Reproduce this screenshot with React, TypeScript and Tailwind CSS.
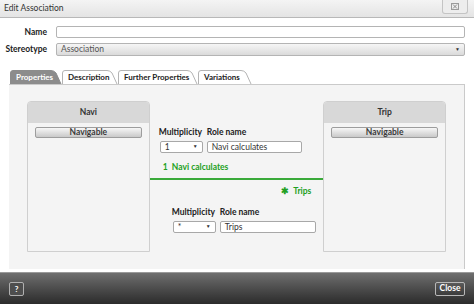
import type { ReactNode } from 'react'

const FONT = "font-['Lato','Noto_Sans',sans-serif]"

type TabDef = { label: string; width: number; active?: boolean }

const TABS: TabDef[] = [
  { label: 'Properties', width: 52, active: true },
  { label: 'Description', width: 56 },
  { label: 'Further Properties', width: 80 },
  { label: 'Variations', width: 54 },
]

function Tab({ label, width, active }: TabDef) {
  const w = width
  const d = `M0.5,14 L0.5,3 Q0.5,0.5 3,0.5 L${w - 11},0.5 Q${w - 8},0.5 ${w - 6},3 L${w - 1},14`
  return (
    <div className="relative h-[14px] shrink-0" style={{ width: w }}>
      <svg className="absolute inset-0" width={w} height={14}>
        <path
          d={d}
          fill={active ? '#8c8c8c' : '#ffffff'}
          stroke={active ? '#8c8c8c' : '#b4b4b4'}
          strokeWidth={1}
        />
      </svg>
      <span
        className={`relative block pl-[6px] pt-[1px] text-[8px] font-bold leading-[12px] ${
          active ? 'text-white' : 'text-[#222]'
        }`}
      >
        {label}
      </span>
    </div>
  )
}

function EndBox({ title }: { title: string }) {
  return (
    <div className="flex h-[151px] w-[123px] flex-col overflow-hidden rounded-t-[4px] border border-[#cfcfcf] bg-[#f4f4f4]">
      <div className="flex h-[21px] items-center justify-center bg-[#d8d8d8] text-[8.5px] font-bold text-[#333]">
        {title}
      </div>
      <div className="px-[7px] pt-[4px]">
        <NavButton />
      </div>
    </div>
  )
}

function NavButton() {
  return (
    <div className="flex h-[11px] items-center justify-center rounded-[2px] border border-[#9d9d9d] bg-gradient-to-b from-[#f7f7f7] to-[#c9c9c9] text-[8.5px] font-bold leading-none text-[#3a3a3a]">
      Navigable
    </div>
  )
}

function SmallSelect({ value }: { value: string }) {
  return (
    <div className="flex h-[12px] w-[43px] items-center justify-between rounded-[2px] border border-[#a8a8a8] bg-white pl-[4px] pr-[4px] text-[8.5px] leading-none text-[#333]">
      <span>{value}</span>
      <span className="text-[5px]">▼</span>
    </div>
  )
}

function TextBox({ value, width }: { value: string; width: number }) {
  return (
    <div
      className="flex h-[12px] items-center rounded-[2px] border border-[#a8a8a8] bg-white pl-[4px] text-[8.5px] leading-none text-[#333]"
      style={{ width }}
    >
      {value}
    </div>
  )
}

function RoleRow({ mult, role, width }: { mult: string; role: string; width: number }) {
  return (
    <div className="flex flex-col gap-[4px]">
      <div className="flex text-[8.5px] font-bold leading-[10px] text-[#222]">
        <span className="w-[48px]">Multiplicity</span>
        <span>Role name</span>
      </div>
      <div className="flex gap-[4px] pl-[1px]">
        <SmallSelect value={mult} />
        <TextBox value={role} width={width} />
      </div>
    </div>
  )
}

function FormRow({ label, children }: { label: string; children: ReactNode }) {
  return (
    <div className="flex items-center">
      <span className="w-[48px] pr-[1px] text-right text-[8.5px] font-bold text-[#222]">{label}</span>
      <div className="ml-[8px] mr-[9px] flex-1">{children}</div>
    </div>
  )
}

export default function App() {
  return (
    <div className={`${FONT} flex h-[304px] w-[474px] flex-col overflow-hidden bg-white`}>
      {/* title bar */}
      <div className="flex h-[18px] shrink-0 items-start justify-between border-b border-[#b8b8b8] bg-gradient-to-b from-[#f4f4f4] to-[#e4e4e4]">
        <span className="pl-[4px] pt-[2px] text-[8.5px] leading-[12px] text-[#333]">Edit Association</span>
        <div className="mr-[6px] flex h-[14px] w-[26px] items-center justify-center rounded-b-[3px] border border-t-0 border-[#c4c4c4] bg-[#ededed]">
          <svg width="8" height="7" viewBox="0 0 8 7">
            <rect x="0.5" y="0.5" width="7" height="6" fill="none" stroke="#9a9a9a" />
            <path d="M2,1.5 L6,5.5 M6,1.5 L2,5.5" stroke="#8a8a8a" />
          </svg>
        </div>
      </div>

      {/* body */}
      <div className="flex flex-1 flex-col pt-[8px]">
        <div className="flex flex-col gap-[4px]">
          <FormRow label="Name">
            <div className="h-[12px] rounded-[2px] border border-[#b4b4b4] bg-white" />
          </FormRow>
          <FormRow label="Stereotype">
            <div className="flex h-[13px] items-center justify-between rounded-[2px] border border-[#b4b4b4] bg-gradient-to-b from-[#f6f6f6] to-[#dadada] pl-[4px] pr-[4px] text-[8.5px] leading-none text-[#555]">
              <span>Association</span>
              <span className="text-[5px] text-[#333]">▼</span>
            </div>
          </FormRow>
        </div>

        {/* tabs */}
        <div className="ml-[10px] mt-[14px] flex">
          {TABS.map((t) => (
            <Tab key={t.label} {...t} />
          ))}
        </div>

        {/* panel */}
        <div className="ml-[9px] mr-[9px] flex h-[185px] border-t border-r border-[#cacaca] bg-[#f4f4f4] px-[18px] pt-[16px]">
          <EndBox title="Navi" />

          <div className="flex w-[174px] flex-col pt-[26px]">
            <div className="pl-[9px]">
              <RoleRow mult="1" role="Navi calculates" width={95} />
            </div>
            <div className="mt-[9px] pl-[13px] text-[8.5px] font-bold leading-[10px] text-[#22a022]">
              1&nbsp; Navi calculates
            </div>
            <div className="mt-[6px] h-[2px] bg-[#3aaa3a]" />
            <div className="mt-[6px] pr-[12px] text-right text-[8.5px] font-bold leading-[10px] text-[#22a022]">
              ✱&nbsp; Trips
            </div>
            <div className="mt-[11px] pl-[22px]">
              <RoleRow mult="*" role="Trips" width={96} />
            </div>
          </div>

          <EndBox title="Trip" />
        </div>
      </div>

      {/* footer */}
      <div className="flex h-[32px] shrink-0 items-center justify-between border-t border-[#9a9a9a] bg-gradient-to-b from-[#6f6f6f] to-[#2c2c2c] px-[9px]">
        <div className="flex h-[14px] w-[15px] items-center justify-center rounded-[2px] border border-[#b0b0b0] bg-[#4e4e4e] text-[8px] font-bold leading-none text-white">
          ?
        </div>
        <div className="flex h-[14px] w-[30px] items-center justify-center rounded-[2px] border border-[#b8b8b8] bg-gradient-to-b from-[#5a5a5a] to-[#3c3c3c] text-[8.5px] font-bold leading-none text-white">
          Close
        </div>
      </div>
    </div>
  )
}
